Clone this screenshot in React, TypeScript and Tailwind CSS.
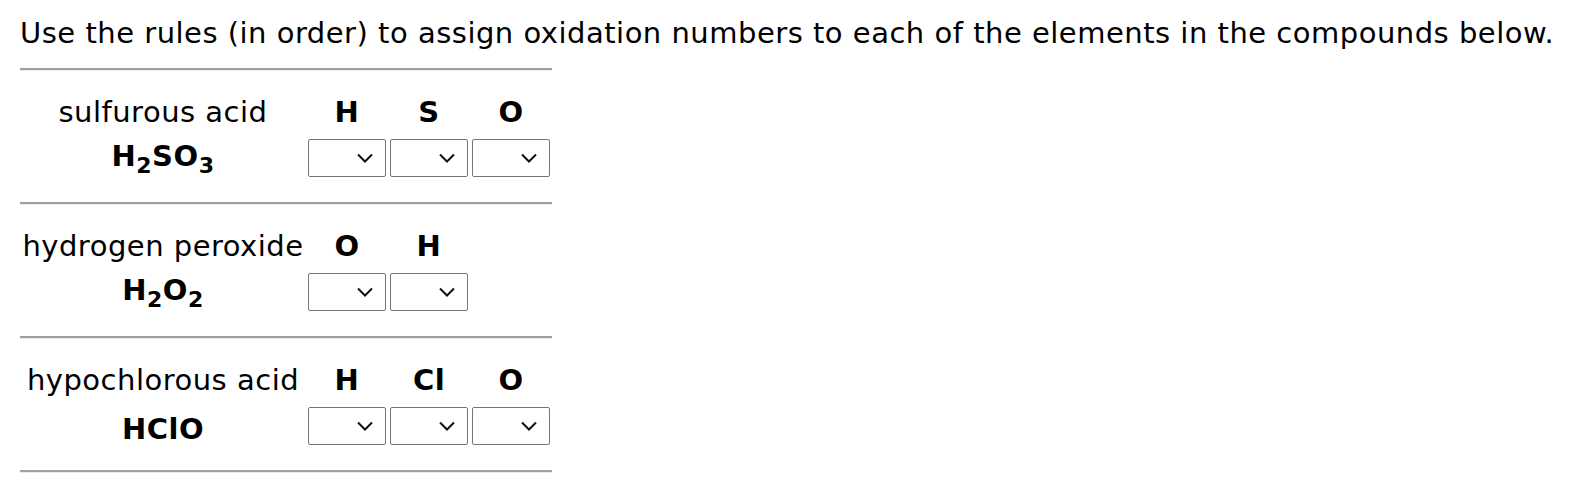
import React from "react";

const Chevron = () => (
  <svg width="18" height="12" viewBox="0 0 18 12" className="absolute right-[11px] top-1/2 -translate-y-1/2">
    <path d="M2 2.5 L9 9.5 L16 2.5" fill="none" stroke="#111" strokeWidth="2" />
  </svg>
);

const Select = () => (
  <div className="relative h-[38px] w-[78px] rounded-[2px] border border-[#767676] bg-white">
    <Chevron />
  </div>
);

const Rule = () => (
  <div className="w-[532px] border-t-[2px] border-b border-t-[#a0a0a0] border-b-[#ececec]" />
);

type Block = {
  name: string;
  formula: React.ReactNode;
  els: string[];
};

const Sub = ({ children }: { children: React.ReactNode }) => (
  <span className="text-[22px] align-[-7px]">{children}</span>
);

const blocks: Block[] = [
  {
    name: "sulfurous acid",
    formula: (
      <>
        H<Sub>2</Sub>SO<Sub>3</Sub>
      </>
    ),
    els: ["H", "S", "O"],
  },
  {
    name: "hydrogen peroxide",
    formula: (
      <>
        H<Sub>2</Sub>O<Sub>2</Sub>
      </>
    ),
    els: ["O", "H"],
  },
  {
    name: "hypochlorous acid",
    formula: <>HClO</>,
    els: ["H", "Cl", "O"],
  },
];

export default function App() {
  return (
    <div className="min-h-[498px] bg-white pl-[20px] pt-[17px] font-['DejaVu_Sans',Verdana,sans-serif] text-[29px] tracking-[0.5px] text-black">
      <p className="whitespace-nowrap leading-[32px]">
        Use the rules (in order) to assign oxidation numbers to each of the elements in the compounds below.
      </p>
      <div className="mt-[19px]">
        <Rule />
        {blocks.map((b) => (
          <div key={b.name}>
            <div className="grid grid-cols-[286px_82px_82px_82px] pt-[24px] pb-[25px]">
              <div className="flex h-[34px] items-center justify-center whitespace-nowrap leading-[34px]">
                {b.name}
              </div>
              {[0, 1, 2].map((i) => (
                <div key={i} className="flex h-[34px] items-center justify-center font-bold leading-[34px]">
                  {b.els[i] ?? ""}
                </div>
              ))}
              <div className="mt-[10px] flex h-[38px] items-center justify-center whitespace-nowrap pt-[5px] font-bold leading-[34px]">
                <span>{b.formula}</span>
              </div>
              {[0, 1, 2].map((i) => (
                <div key={i} className="mt-[10px] flex h-[38px] justify-center">
                  {b.els[i] ? <Select /> : null}
                </div>
              ))}
            </div>
            <Rule />
          </div>
        ))}
      </div>
    </div>
  );
}
